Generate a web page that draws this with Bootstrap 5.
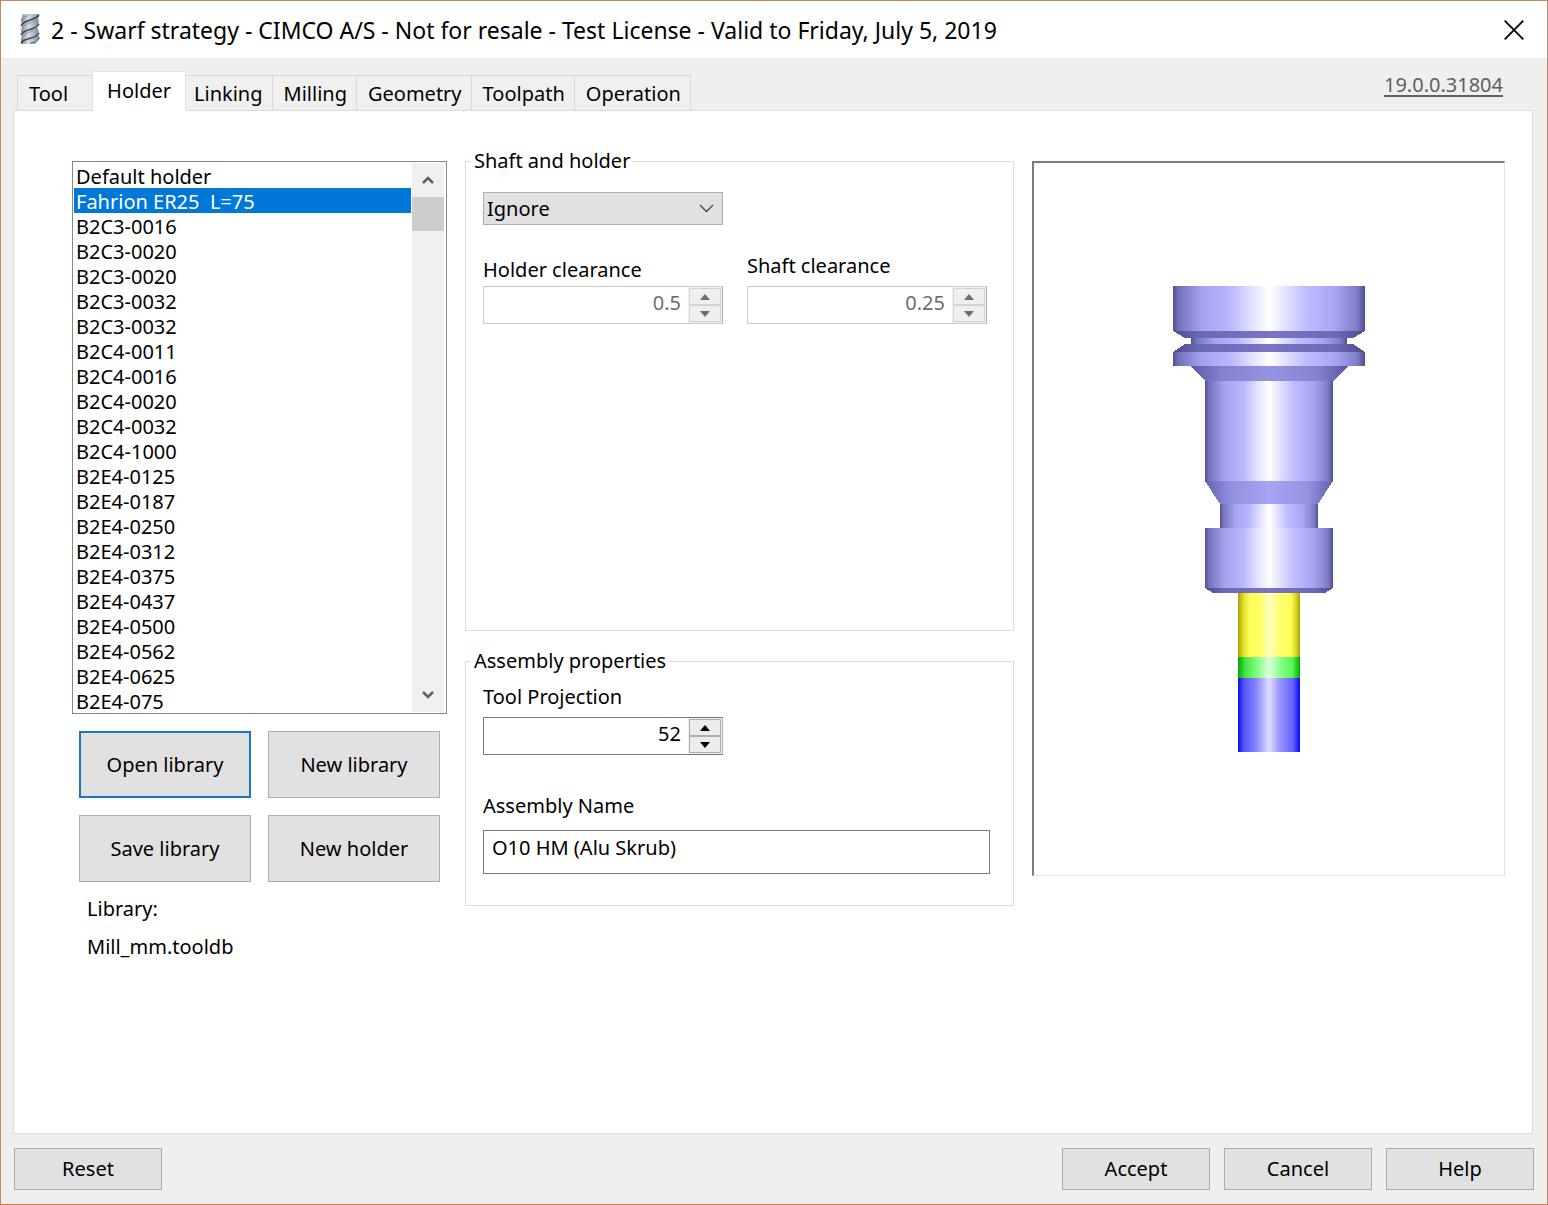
<!DOCTYPE html>
<html lang="en">
<head>
<meta charset="utf-8">
<meta name="viewport" content="width=device-width, initial-scale=1">
<title>2 - Swarf strategy</title>
<link href="https://cdn.jsdelivr.net/npm/bootstrap@5.3.0/dist/css/bootstrap.min.css" rel="stylesheet">
<style>
  :root { --ui: "Noto Sans", "DejaVu Sans Condensed", sans-serif; --face: #e1e1e1; --edge: #adadad; }
  body { font-family: var(--ui); font-size: 20px; line-height: 24px; color: #000; background: #efefef; }
  button, input, select { font: inherit; color: inherit; }
  .dialog { border: 1px solid #c08a63; border-bottom-color: #d5824a; }
  .titlebar { height: 57px; padding: 0 18px 0 19px; background: #fff; }
  .titlebar svg { margin-bottom: 2px; }
  .titlebar h1 { font-size: 23px; line-height: 30px; margin: 1px 0 0 11px; }
  .close-x { width: 30px; height: 30px; padding: 0; border: 0; background: none; }
  .close-x svg { display: block; margin: auto; }

  .tab-row { padding: 13px 44px 0 16px; }
  .tab-row .nav-tabs { border: 0; align-items: flex-end; }
  .tab-row .nav-item { margin-bottom: -1px; }
  .tab-row .nav-link { margin: 0 0 0 -1px; padding: 5px 9px 4px 11px; border: 1px solid #d9d9d9; border-radius: 0; background: #f0f0f0; color: #000; line-height: 25px; }
  .tab-row .nav-link.first-tab { margin-left: 0; padding-right: 24px; }
  .tab-row .nav-link.after-active { padding-left: 8px; }
  .tab-row .nav-link.active { padding: 6px 14px 7px; background: #fff; border-bottom-color: #fff; position: relative; z-index: 1; }
  .version { color: #5f5f5f; padding-top: 2px; text-underline-offset: 3px; }
  .pane { margin: 0 14px 0 12px; padding: 38px 27px 38px 58px; background: #fff; border: 1px solid #dcdcdc; }
  .columns { gap: 18px; }
  .col-library { flex: 375 1 0; min-width: 0; padding-top: 12px; }
  .col-settings { flex: 549 1 0; min-width: 0; }
  .col-preview { flex: 473 1 0; min-width: 0; padding-top: 12px; }

  .listbox { border: 1px solid #828790; padding: 1px 1px 0; }
  .listbox select { flex: 1; min-width: 0; height: 550px; padding: 0; border: 0; border-radius: 0; overflow: hidden; outline: 0; background: #fff; scrollbar-width: none; }
  .listbox option { min-height: 25px; height: 25px; line-height: 25px; padding: 0 2px; color: #000; }
  .listbox option:checked { color: #fff; background: #0078d7 linear-gradient(#0078d7, #0078d7); }
  .scroller { width: 32px; margin: 0 1px 1px; background: #f0f0f0; }
  .scroller button { display: flex; align-items: center; justify-content: center; width: 100%; height: 34px; border: 0; padding: 0; background: none; }
  .scroller .thumb { height: 34px; background: #cdcdcd; }

  .library-buttons { display: grid; grid-template-columns: 172px 172px; gap: 17px; justify-content: center; margin-top: 17px; }
  .win-btn { --bs-btn-border-radius: 0; --bs-btn-bg: var(--face); --bs-btn-border-color: var(--edge); --bs-btn-color: #000; --bs-btn-font-size: 20px; --bs-btn-line-height: 24px; --bs-btn-padding-y: 0; --bs-btn-padding-x: 4px; --bs-btn-font-family: var(--ui); --bs-btn-hover-bg: #e5f1fb; --bs-btn-hover-border-color: #0078d7; --bs-btn-hover-color: #000; }
  .library-buttons .win-btn { height: 67px; }
  .win-btn.is-default { --bs-btn-border-width: 2px; --bs-btn-border-color: #1c76bb; }
  .library-info { padding: 15px 0 0 15px; }
  .library-info p { margin-bottom: 14px; }

  .group-box { border: 1px solid #dcdcdc; padding: 0 23px 0 17px; }
  .group-box legend { float: none; width: auto; margin: 0 0 0 -12px; padding: 0 3px; font-size: 20px; line-height: 24px; }
  .group-shaft { min-height: 482px; margin-bottom: 18px; }
  .group-assembly { min-height: 257px; }
  .mode-select { width: 240px; height: 33px; margin-top: 19px; padding: 0 30px 0 3px; border: 1px solid var(--edge); border-radius: 0; background-color: var(--face); color: #000; font-size: 20px; line-height: 24px; background-position: right 8px center; background-size: 15px 9px; background-image: url("data:image/svg+xml,%3Csvg xmlns='http://www.w3.org/2000/svg' viewBox='0 0 15 9'%3E%3Cpath d='M1 1l6.500 6.500L14 1' fill='none' stroke='%23444' stroke-width='1.300'/%3E%3C/svg%3E"); }
  .clearances { margin-top: 29px; gap: 24px; }
  .field-label { display: block; }
  .spin { width: 240px; height: 38px; background: #fff; border: 1px solid #7a7a7a; border-right-color: #adadad; }
  .spin input { flex: 1; min-width: 0; border: 0; outline: 0; padding: 0 7px 5px; text-align: right; background: none; appearance: textfield; -moz-appearance: textfield; }
  .spin input::-webkit-inner-spin-button, .spin input::-webkit-outer-spin-button { appearance: none; margin: 0; }
  .spin-keys { width: 34px; padding: 1px; background: #f0f0f0; }
  .spin-keys button { flex: 1; display: flex; align-items: center; justify-content: center; padding: 0; border: 1px solid #adadad; background: #ececec; }
  .spin.is-off { border-color: #ccc #adadad #ccc #ccc; }
  .spin.is-off input { color: #6d6d6d; }
  .spin.is-off button { border-color: #d4d4d4; background: #efefef; color: #6d6d6d; }
  .name-label { margin: 39px 0 12px; }
  .name-box { width: 100%; height: 44px; padding: 0 8px 10px; border: 1px solid #7a7a7a; border-radius: 0; background: #fff; }

  .preview { height: 715px; border: 1px solid #e3e3e3; border-top: 2px solid #7b7b7b; border-left: 2px solid #7b7b7b; }
  .footer-bar { gap: 14px; padding: 14px 13px 14px; }
  .footer-bar .win-btn { width: 148px; height: 42px; }
</style>
<script src="https://cdn.jsdelivr.net/npm/bootstrap@5.3.0/dist/js/bootstrap.bundle.min.js"></script>
</head>
<body>
<div class="dialog d-flex flex-column min-vh-100">
  <header class="titlebar d-flex align-items-center">
    <svg width="20" height="30" viewBox="0 0 20 30" aria-hidden="true">
      <defs><linearGradient id="steel"><stop offset="0" stop-color="#7d8892"/><stop offset=".4" stop-color="#d6dfe7"/><stop offset="1" stop-color="#7a858e"/></linearGradient></defs>
      <path d="M3 0H19L18 4L19 9L17 13L19 18L18 21L20 24L15 30H1L1 25L2 22L1 17L2 12L1 6Z" fill="url(#steel)"/>
      <path d="M19 1C15 7 4 5 1 12M19 10C15 17 4 14 1 21M19 19C15 26 5 23 1 29" fill="none" stroke="#3c444b" stroke-width="1.500"/>
      <path d="M10 0C7 3 2 3 1 7M18 5C13 9 5 9 2 14M18 14C13 18 5 18 2 23" fill="none" stroke="#77828c" stroke-width=".7"/>
      <path d="M19 24C17 28 14 29 10 29" fill="none" stroke="#525c65"/>
    </svg>
    <h1 class="fw-normal flex-grow-1 text-truncate">2 - Swarf strategy - CIMCO A/S - Not for resale - Test License - Valid to Friday, July 5, 2019</h1>
    <button class="close-x" type="button" aria-label="Close"><svg width="20" height="20" viewBox="0 0 20 20"><path d="M.7 .7L19.300 19.300M19.300 .7L.7 19.300" stroke="#000" stroke-width="1.800"/></svg></button>
  </header>

  <div class="tab-row d-flex">
    <ul class="nav nav-tabs flex-grow-1">
      <li class="nav-item"><a class="nav-link first-tab" href="#tool">Tool</a></li>
      <li class="nav-item"><a class="nav-link active" aria-current="page" href="#holder">Holder</a></li>
      <li class="nav-item"><a class="nav-link after-active" href="#linking">Linking</a></li>
      <li class="nav-item"><a class="nav-link" href="#milling">Milling</a></li>
      <li class="nav-item"><a class="nav-link" href="#geometry">Geometry</a></li>
      <li class="nav-item"><a class="nav-link" href="#toolpath">Toolpath</a></li>
      <li class="nav-item"><a class="nav-link" href="#operation">Operation</a></li>
    </ul>
    <a class="version" href="#about">19.0.0.31804</a>
  </div>

  <main class="pane flex-grow-1" id="holder">
    <div class="columns d-flex align-items-start">
      <section class="col-library">
        <div class="listbox d-flex">
          <select size="22" aria-label="Holders">
            <option>Default holder</option>
            <option selected>Fahrion ER25&nbsp; L=75</option>
            <option>B2C3-0016</option>
            <option>B2C3-0020</option>
            <option>B2C3-0020</option>
            <option>B2C3-0032</option>
            <option>B2C3-0032</option>
            <option>B2C4-0011</option>
            <option>B2C4-0016</option>
            <option>B2C4-0020</option>
            <option>B2C4-0032</option>
            <option>B2C4-1000</option>
            <option>B2E4-0125</option>
            <option>B2E4-0187</option>
            <option>B2E4-0250</option>
            <option>B2E4-0312</option>
            <option>B2E4-0375</option>
            <option>B2E4-0437</option>
            <option>B2E4-0500</option>
            <option>B2E4-0562</option>
            <option>B2E4-0625</option>
            <option>B2E4-075</option>
          </select>
          <div class="scroller d-flex flex-column">
            <button type="button" aria-label="Scroll up"><svg width="12" height="10" viewBox="0 0 12 10"><path d="M1 8L6 3L11 8" fill="none" stroke="#606060" stroke-width="2.500"/></svg></button>
            <div class="thumb"></div>
            <button class="mt-auto" type="button" aria-label="Scroll down"><svg width="12" height="10" viewBox="0 0 12 10"><path d="M1 2L6 7L11 2" fill="none" stroke="#606060" stroke-width="2.500"/></svg></button>
          </div>
        </div>
        <div class="library-buttons">
          <button class="btn win-btn is-default" type="button">Open library</button>
          <button class="btn win-btn" type="button">New library</button>
          <button class="btn win-btn" type="button">Save library</button>
          <button class="btn win-btn" type="button">New holder</button>
        </div>
        <div class="library-info">
          <p>Library:</p>
          <p>Mill_mm.tooldb</p>
        </div>
      </section>

      <section class="col-settings">
        <fieldset class="group-box group-shaft">
          <legend>Shaft and holder</legend>
          <select class="form-select mode-select" aria-label="Shaft and holder"><option>Ignore</option></select>
          <div class="clearances d-flex">
            <div>
              <label class="field-label pt-1 mb-1" for="holderClr">Holder clearance</label>
              <div class="spin is-off d-flex">
                <input id="holderClr" type="number" value="0.5" step="0.1" disabled>
                <div class="spin-keys d-flex flex-column">
                  <button type="button" disabled aria-label="Increase"><svg width="10" height="6"><path d="M0 6L5 0L10 6Z" fill="currentColor"/></svg></button>
                  <button type="button" disabled aria-label="Decrease"><svg width="10" height="6"><path d="M0 0H10L5 6Z" fill="currentColor"/></svg></button>
                </div>
              </div>
            </div>
            <div>
              <label class="field-label mb-2" for="shaftClr">Shaft clearance</label>
              <div class="spin is-off d-flex">
                <input id="shaftClr" type="number" value="0.25" step="0.01" disabled>
                <div class="spin-keys d-flex flex-column">
                  <button type="button" disabled aria-label="Increase"><svg width="10" height="6"><path d="M0 6L5 0L10 6Z" fill="currentColor"/></svg></button>
                  <button type="button" disabled aria-label="Decrease"><svg width="10" height="6"><path d="M0 0H10L5 6Z" fill="currentColor"/></svg></button>
                </div>
              </div>
            </div>
          </div>
        </fieldset>

        <fieldset class="group-box group-assembly">
          <legend>Assembly properties</legend>
          <label class="field-label mt-2 pt-1 mb-2" for="projection">Tool Projection</label>
          <div class="spin d-flex">
            <input id="projection" type="number" value="52">
            <div class="spin-keys d-flex flex-column">
              <button type="button" aria-label="Increase"><svg width="10" height="6"><path d="M0 6L5 0L10 6Z" fill="currentColor"/></svg></button>
              <button type="button" aria-label="Decrease"><svg width="10" height="6"><path d="M0 0H10L5 6Z" fill="currentColor"/></svg></button>
            </div>
          </div>
          <label class="field-label name-label" for="asmName">Assembly Name</label>
          <input class="name-box" id="asmName" type="text" value="O10 HM (Alu Skrub)">
        </fieldset>
      </section>

      <section class="col-preview">
        <div class="preview d-flex align-items-center justify-content-center">
          <svg width="192" height="466" viewBox="0 0 192 466" role="img" aria-label="Tool assembly" shape-rendering="crispEdges">
            <defs>
              <linearGradient id="body">
                <stop offset="0" stop-color="#504e98"/><stop offset=".03" stop-color="#7472b8"/><stop offset=".15" stop-color="#a4a2f0"/><stop offset=".3" stop-color="#bab8fb"/><stop offset=".4" stop-color="#dedeff"/><stop offset=".5" stop-color="#fff"/><stop offset=".58" stop-color="#e4e4ff"/><stop offset=".68" stop-color="#c2c0ff"/><stop offset=".85" stop-color="#a6a4f2"/><stop offset=".96" stop-color="#7e7cc4"/><stop offset="1" stop-color="#504e98"/>
              </linearGradient>
              <linearGradient id="chamfer">
                <stop offset="0" stop-color="#4c4a92"/><stop offset=".15" stop-color="#6c6ab6"/><stop offset=".5" stop-color="#7876c4"/><stop offset=".85" stop-color="#6c6ab6"/><stop offset="1" stop-color="#4c4a92"/>
              </linearGradient>
              <linearGradient id="taper">
                <stop offset="0" stop-color="#5a58a4"/><stop offset=".2" stop-color="#8482d0"/><stop offset=".5" stop-color="#9492e2"/><stop offset=".8" stop-color="#8684d2"/><stop offset="1" stop-color="#5a58a4"/>
              </linearGradient>
              <linearGradient id="taper2">
                <stop offset="0" stop-color="#6462ac"/><stop offset=".2" stop-color="#9290e0"/><stop offset=".5" stop-color="#a6a4f2"/><stop offset=".8" stop-color="#9492e2"/><stop offset="1" stop-color="#6462ac"/>
              </linearGradient>
              <linearGradient id="yellow">
                <stop offset="0" stop-color="#a8a400"/><stop offset=".1" stop-color="#e6e432"/><stop offset=".2" stop-color="#ffff58"/><stop offset=".38" stop-color="#ffff68"/><stop offset=".5" stop-color="#ffffc8"/><stop offset=".65" stop-color="#ffff74"/><stop offset=".85" stop-color="#ffff58"/><stop offset=".93" stop-color="#dcda2c"/><stop offset="1" stop-color="#a8a400"/>
              </linearGradient>
              <linearGradient id="green">
                <stop offset="0" stop-color="#00a800"/><stop offset=".12" stop-color="#48e448"/><stop offset=".3" stop-color="#7cff7c"/><stop offset=".5" stop-color="#dcffdc"/><stop offset=".7" stop-color="#84ff84"/><stop offset=".88" stop-color="#58f458"/><stop offset="1" stop-color="#00a800"/>
              </linearGradient>
              <linearGradient id="blue">
                <stop offset="0" stop-color="#0c0cf0"/><stop offset=".1" stop-color="#5656ff"/><stop offset=".3" stop-color="#8886ff"/><stop offset=".5" stop-color="#dedeff"/><stop offset=".68" stop-color="#9694ff"/><stop offset=".88" stop-color="#6664ff"/><stop offset="1" stop-color="#0c0cf0"/>
              </linearGradient>
            </defs>
            <rect width="192" height="45" fill="url(#body)"/>
            <path d="M0 45H192L180 52H12Z" fill="url(#chamfer)"/>
            <rect x="18" y="52" width="156" height="6" fill="url(#body)"/>
            <path d="M12 58H180L192 66H0Z" fill="url(#chamfer)"/>
            <rect y="66" width="192" height="14" fill="url(#body)"/>
            <path d="M17 80H175L160 95H32Z" fill="url(#taper)"/>
            <rect x="32" y="95" width="128" height="100" fill="url(#body)"/>
            <path d="M32 195H160L145 218H47Z" fill="url(#taper2)"/>
            <rect x="47" y="218" width="98" height="24" fill="url(#body)"/>
            <rect x="32" y="242" width="128" height="60" fill="url(#body)"/>
            <path d="M32 302H160L152 307H40Z" fill="url(#chamfer)"/>
            <rect x="65" y="307" width="62" height="64" fill="url(#yellow)"/>
            <rect x="65" y="371" width="62" height="21" fill="url(#green)"/>
            <rect x="65" y="392" width="62" height="74" fill="url(#blue)"/>
          </svg>
        </div>
      </section>
    </div>
  </main>

  <footer class="footer-bar d-flex">
    <button class="btn win-btn me-auto" type="reset">Reset</button>
    <button class="btn win-btn" type="submit">Accept</button>
    <button class="btn win-btn" type="button">Cancel</button>
    <button class="btn win-btn" type="button">Help</button>
  </footer>
</div>
</body>
</html>
